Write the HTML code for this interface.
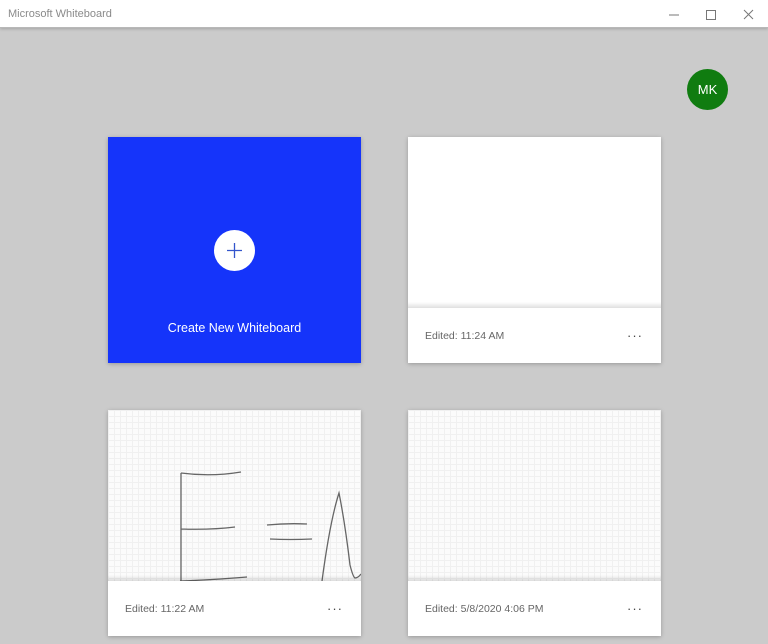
<!DOCTYPE html>
<html><head><style>
*{margin:0;padding:0;box-sizing:border-box}
body{width:768px;height:644px;background:#cbcbcb;font-family:"Liberation Sans",sans-serif;position:relative;overflow:hidden}
.tb{position:absolute;left:0;top:0;width:768px;height:28px;background:#fff;border-bottom:1px solid #b8b8b8;box-shadow:0 1px 3px rgba(0,0,0,.2)}
.tb .t{position:absolute;left:8px;top:8px;font-size:11px;color:#8a8a8a}
.av{position:absolute;left:687px;top:69px;width:41px;height:41px;border-radius:50%;background:#107c10;color:#fff;font-size:13px;text-align:center;line-height:41px}
.card{position:absolute;width:253px;height:226px;background:#fff;box-shadow:0 1px 4px rgba(0,0,0,.25)}
.prev{position:absolute;left:0;top:0;width:100%;height:171px;background:#fff}
.prev:after{content:"";position:absolute;left:0;right:0;bottom:0;height:6px;background:linear-gradient(to bottom,rgba(0,0,0,0),rgba(0,0,0,.12))}
.foot{position:absolute;left:0;top:171px;width:100%;height:55px}
.foot .e{position:absolute;left:17px;top:22px;font-size:10.5px;color:#666}
.foot .d{position:absolute;right:18px;top:20px;font-size:13px;color:#444;letter-spacing:1px}
.grid{background-color:#fbfbfb;background-image:linear-gradient(#f0f0f0 1px,transparent 1px),linear-gradient(90deg,#f0f0f0 1px,transparent 1px);background-size:6px 6px}
</style></head><body>
<div class="tb"><span class="t">Microsoft Whiteboard</span>
<svg style="position:absolute;left:660px;top:8px" width="100" height="14"><line x1="9" y1="7" x2="19" y2="7" stroke="#777"/><rect x="46.5" y="2.5" width="9" height="9" fill="none" stroke="#777"/><path d="M84 2l9 9M93 2l-9 9" stroke="#777"/></svg></div>
<div class="av">MK</div>
<div class="card" style="left:108px;top:137px;background:#1534fa">
<div style="position:absolute;left:106px;top:93px;width:41px;height:41px;border-radius:50%;background:#fff"><svg width="41" height="41"><path d="M20.5 13v15M13 20.5h15" stroke="#3355cc" stroke-width="1.3"/></svg></div>
<div style="position:absolute;left:0;width:100%;top:184px;text-align:center;color:#fff;font-size:12.5px">Create New Whiteboard</div></div>
<div class="card" style="left:408px;top:137px"><div class="prev"></div><div class="foot"><span class="e">Edited: 11:24 AM</span><span class="d">···</span></div></div>
<div class="card" style="left:108px;top:410px"><div class="prev grid">
<svg width="253" height="171" style="position:absolute;left:0;top:0" fill="none" stroke="#666" stroke-width="1.3"><path d="M73 63v108M73 63q30 4 60-1M73 119q30 1 54-2M72 171q30-1 67-4M159 115q20-2 40-1M162 129q20 1 42 0M214 171q8-60 17-88q6 30 11 72q3 12 5 13q3 0 6-4"/></svg></div>
<div class="foot"><span class="e">Edited: 11:22 AM</span><span class="d">···</span></div></div>
<div class="card" style="left:408px;top:410px"><div class="prev grid"></div><div class="foot"><span class="e">Edited: 5/8/2020 4:06 PM</span><span class="d">···</span></div></div>
</body></html>
